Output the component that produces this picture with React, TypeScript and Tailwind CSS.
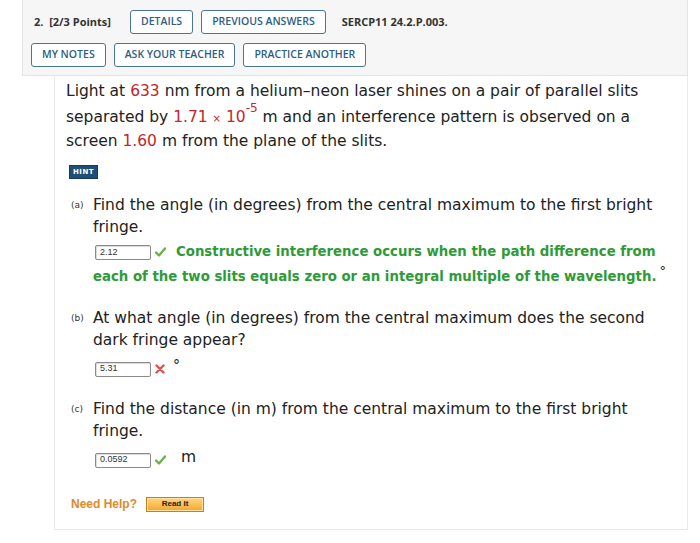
import React from "react";

const Check = () => (
  <svg width="11" height="10" viewBox="0 0 11 10" className="inline-block">
    <path d="M1 5.5 L4 8.5 L10 1.5" fill="none" stroke="#6ab04c" strokeWidth="2.4" strokeLinecap="round" strokeLinejoin="round" />
  </svg>
);

const Cross = () => (
  <svg width="10" height="10" viewBox="0 0 10 10" className="inline-block">
    <path d="M1.5 1.5 L8.5 8.5 M8.5 1.5 L1.5 8.5" fill="none" stroke="#e05252" strokeWidth="2.4" strokeLinecap="round" />
  </svg>
);

const Btn = ({ children }: { children: React.ReactNode }) => (
  <span className="h-[24px] px-[10px] flex items-center border-[1.5px] border-[#4a7595] rounded-[3px] text-[10.5px] font-semibold text-[#2d5d82] bg-white">
    {children}
  </span>
);

const Box = ({ v }: { v: string }) => (
  <span className="inline-flex items-center w-[56px] h-[15px] border border-[#8a8a8a] rounded-[2px] shadow-[inset_1px_1px_1px_rgba(0,0,0,0.15)] pl-[4px] text-[9px] font-normal text-[#333] align-middle font-['Liberation_Sans',Arial,sans-serif]">
    {v}
  </span>
);

const Red = ({ children }: { children: React.ReactNode }) => <span className="text-[#c1272d]">{children}</span>;

export default function App() {
  return (
    <div className="w-[700px] h-[543px] bg-white overflow-hidden">
      <div className="ml-[22px] w-[666px] bg-[#f6f6f6] border border-t-0 border-[#e4e4e4] px-[8px] pt-[10px] pb-[8px] flex flex-col gap-[9px] font-['Open_Sans',sans-serif]">
        <div className="flex items-center h-[24px]">
          <span className="ml-[3px] font-bold text-[11px] text-[#333] w-[96px]">2.&nbsp; [2/3 Points]</span>
          <div className="flex gap-[8px]">
            <Btn>DETAILS</Btn>
            <Btn>PREVIOUS ANSWERS</Btn>
          </div>
          <span className="ml-[16px] font-bold text-[11px] text-[#333]">SERCP11 24.2.P.003.</span>
        </div>
        <div className="flex items-center gap-[8px]">
          <Btn>MY NOTES</Btn>
          <Btn>ASK YOUR TEACHER</Btn>
          <Btn>PRACTICE ANOTHER</Btn>
        </div>
      </div>
      <div className="ml-[54px] w-[634px] h-[454px] border border-t-0 border-[#e9e9e9] bg-white pl-[11px] pr-[11px] pt-[4px] text-[#222] font-['DejaVu_Sans',Verdana,sans-serif]">
        <p className="text-[15.5px] leading-[22px]">
          Light at <Red>633</Red> nm from a helium–neon laser shines on a pair of parallel slits separated by{" "}
          <Red>
            1.71 <span className="text-[10px]">×</span> 10<sup className="text-[12px] leading-none top-0 align-[10px]">-5</sup>
          </Red>{" "}
          m and an interference pattern is observed on a screen <Red>1.60</Red> m from the plane of the slits.
        </p>
        <div className="mt-[13px] ml-[3px] w-[29px] h-[14px] bg-[#1f4e79] border border-[#163a5c] flex items-center justify-center text-white text-[7px] font-bold tracking-[0.5px]">
          HINT
        </div>

        <div className="mt-[15px] flex">
          <span className="w-[27px] pl-[5px] text-[9px] leading-[22px] text-[#333]">(a)</span>
          <div className="flex-1">
            <p className="text-[15.5px] leading-[22px]">Find the angle (in degrees) from the central maximum to the first bright fringe.</p>
            <p className="mt-[1px] text-[13.3px] leading-[25px] font-bold text-[#2e9a38]">
              <span className="ml-[2px]"><Box v="2.12" /></span>
              <span className="ml-[4px] mr-[10px]"><Check /></span>
              Constructive interference occurs when the path difference from each of the two slits equals zero or an integral multiple of the{" "}
              <span className="whitespace-nowrap">
                wavelength.<sup className="text-[#222] text-[13px] ml-[3px] font-normal">°</sup>
              </span>
            </p>
          </div>
        </div>

        <div className="mt-[18px] flex">
          <span className="w-[27px] pl-[5px] text-[9px] leading-[22px] text-[#333]">(b)</span>
          <div className="flex-1">
            <p className="text-[15.5px] leading-[22px]">At what angle (in degrees) from the central maximum does the second dark fringe appear?</p>
            <div className="mt-[10px] flex items-center h-[15px]">
              <span className="ml-[2px]"><Box v="5.31" /></span>
              <span className="ml-[4px] flex"><Cross /></span>
              <span className="ml-[8px] text-[14px] relative top-[-3px]">°</span>
            </div>
          </div>
        </div>

        <div className="mt-[22px] flex">
          <span className="w-[27px] pl-[5px] text-[9px] leading-[22px] text-[#333]">(c)</span>
          <div className="flex-1">
            <p className="text-[15.5px] leading-[22px]">Find the distance (in m) from the central maximum to the first bright fringe.</p>
            <div className="mt-[10px] flex items-center h-[15px]">
              <span className="ml-[2px]"><Box v="0.0592" /></span>
              <span className="ml-[4px] flex"><Check /></span>
              <span className="ml-[15px] text-[15.5px] relative top-[-2px]">m</span>
            </div>
          </div>
        </div>

        <div className="mt-[28px] ml-[5px] flex items-center gap-[9px] font-['Liberation_Sans',Arial,sans-serif]">
          <span className="text-[12px] font-bold text-[#e08a28]">Need Help?</span>
          <span className="w-[58px] h-[15px] flex items-center justify-center border border-[#d07a1a] bg-gradient-to-b from-[#ffd77a] to-[#f4a52c] text-[8px] font-bold text-[#222] shadow-[inset_0_0_0_1px_#ffe3a0]">
            Read It
          </span>
        </div>
      </div>
    </div>
  );
}
